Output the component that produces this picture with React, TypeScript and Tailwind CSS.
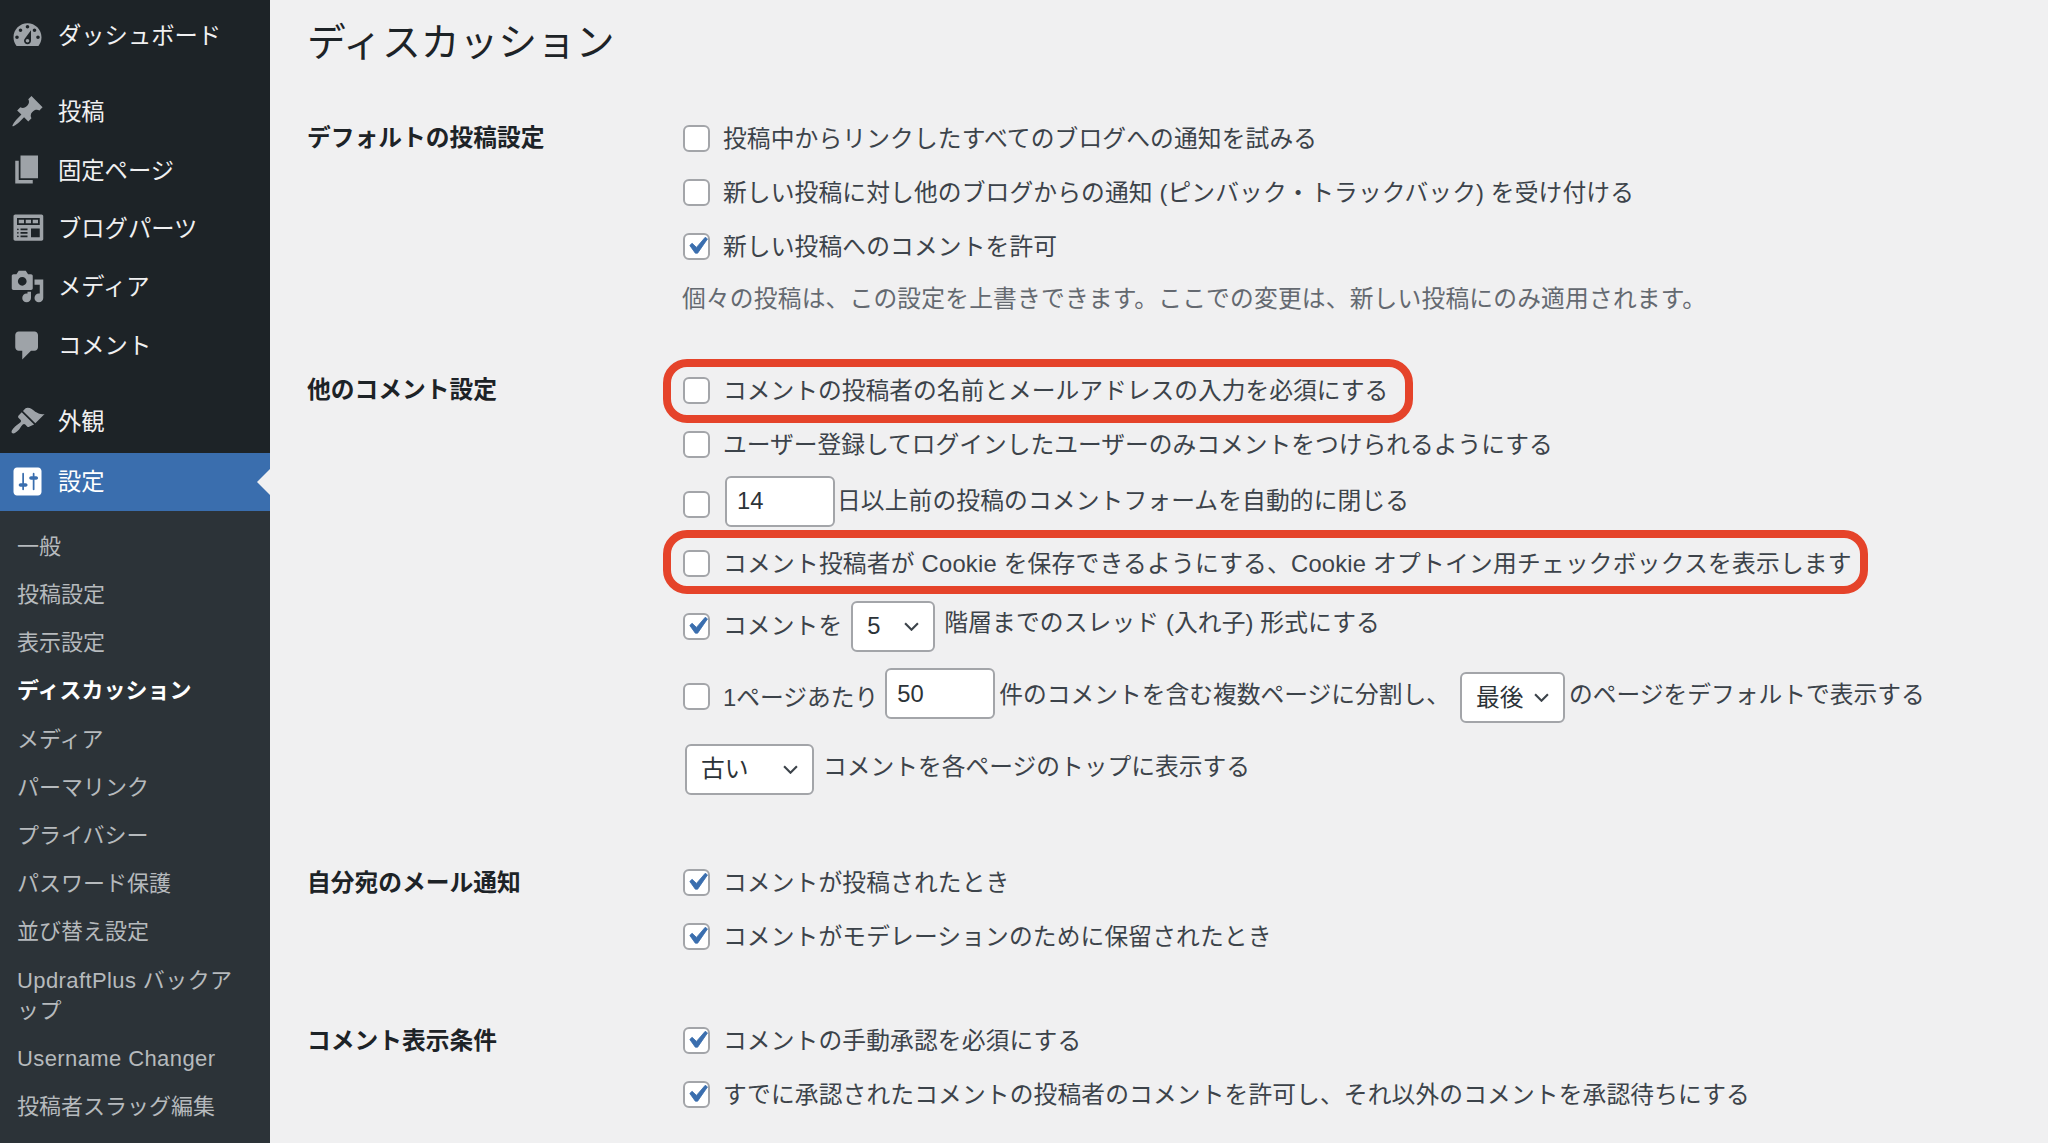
import type { ReactNode } from 'react'

const icons = {
  dashboard:
    'M3.76 16h12.48c1.1-1.37 1.76-3.11 1.76-5 0-4.42-3.58-8-8-8s-8 3.58-8 8c0 1.89.66 3.63 1.76 5zM10 4c.55 0 1 .45 1 1s-.45 1-1 1-1-.45-1-1 .45-1 1-1zM6 6c.55 0 1 .45 1 1s-.45 1-1 1-1-.45-1-1 .45-1 1-1zm8 0c.55 0 1 .45 1 1s-.45 1-1 1-1-.45-1-1 .45-1 1-1zm-5.37 5.55L12 7v6c0 1.1-.9 2-2 2s-2-.9-2-2c0-.57.24-1.08.63-1.45zM4 10c.55 0 1 .45 1 1s-.45 1-1 1-1-.45-1-1 .45-1 1-1zm12 0c.55 0 1 .45 1 1s-.45 1-1 1-1-.45-1-1 .45-1 1-1zm-5 3c0-.55-.45-1-1-1s-1 .45-1 1 .45 1 1 1 1-.45 1-1z',
  pin: 'M10.44 3.02l1.82-1.82 6.36 6.35-1.83 1.82c-1.05-.68-2.48-.57-3.41.36l-.75.75c-.92.93-1.04 2.35-.35 3.41l-1.83 1.82-2.41-2.41-2.8 2.79c-.42.42-3.38 2.71-3.8 2.29s1.86-3.39 2.28-3.81l2.79-2.79L4.1 9.36l1.83-1.82c1.05.69 2.48.57 3.4-.36l.75-.75c.93-.92 1.05-2.35.36-3.41z',
  pages: 'M6 15V2h10v13H6zm-1 1h8v2H3V5h2v11z',
  widgets:
    'M19 16V3c0-.55-.45-1-1-1H3c-.55 0-1 .45-1 1v13c0 .55.45 1 1 1h15c.55 0 1-.45 1-1zM4 4h13v4H4V4zm1 1v2h3V5H5zm4 0v2h3V5H9zm4 0v2h3V5h-3zm-8.5 5c.28 0 .5.22.5.5s-.22.5-.5.5-.5-.22-.5-.5.22-.5.5-.5zM6 10h4v1H6v-1zm6 0h5v5h-5v-5zm-7.5 2c.28 0 .5.22.5.5s-.22.5-.5.5-.5-.22-.5-.5.22-.5.5-.5zM6 12h4v1H6v-1zm-1.5 2c.28 0 .5.22.5.5s-.22.5-.5.5-.5-.22-.5-.5.22-.5.5-.5zM6 14h4v1H6v-1z',
  media:
    'M13 11V4c0-.55-.45-1-1-1h-1.67L9 1H5L3.67 3H2c-.55 0-1 .45-1 1v7c0 .55.45 1 1 1h10c.55 0 1-.45 1-1zM7 4.5c1.38 0 2.5 1.12 2.5 2.5S8.38 9.5 7 9.5 4.5 8.38 4.5 7 5.62 4.5 7 4.5zM14 6h5v10.5c0 1.38-1.12 2.5-2.5 2.5S14 17.88 14 16.5s1.12-2.5 2.5-2.5c.17 0 .34.02.5.05V9h-3V6zm-4 8.05V13h2v3.5c0 1.38-1.12 2.5-2.5 2.5S7 17.88 7 16.5 8.12 14 9.5 14c.17 0 .34.02.5.05z',
  comments: 'M5 2h9c1.1 0 2 .9 2 2v7c0 1.1-.9 2-2 2h-2l-5 5v-5H5c-1.1 0-2-.9-2-2V4c0-1.1.9-2 2-2z',
  appearance:
    'M14.48 11.06L7.41 3.99l1.5-1.5c.5-.56 2.3-.47 3.51.32 1.21.8 1.43 1.28 2.91 2.1 1.18.64 2.45 1.26 4.45.85zm-.71.71L6.7 4.77 4.93 6.54c-.39.39-.39 1.02 0 1.41l1.06 1.06c.39.39.39 1.03 0 1.42-.6.6-1.43 1.11-2.21 1.69-.35.26-.7.53-1.01.84-1.34 1.34-2.37 2.85-1.6 3.62.77.77 2.28-.26 3.6-1.6.31-.31.58-.66.84-1.01.58-.78 1.09-1.61 1.69-2.21.39-.39 1.02-.39 1.41 0l1.06 1.06c.39.39 1.02.39 1.41 0z',
  settings:
    'M18 16V4c0-1.1-.9-2-2-2H4c-1.1 0-2 .9-2 2v12c0 1.1.9 2 2 2h12c1.1 0 2-.9 2-2zM8 11h1c.55 0 1 .45 1 1s-.45 1-1 1H8v1.5c0 .28-.22.5-.5.5s-.5-.22-.5-.5V13H6c-.55 0-1-.45-1-1s.45-1 1-1h1V5.5c0-.28.22-.5.5-.5s.5.22.5.5V11zm5-2h-1c-.55 0-1-.45-1-1s.45-1 1-1h1V5.5c0-.28.22-.5.5-.5s.5.22.5.5V7h1c.55 0 1 .45 1 1s-.45 1-1 1h-1v5.5c0 .28-.22.5-.5.5s-.5-.22-.5-.5V9z',
}

function MenuIcon({ d, light }: { d: string; light?: boolean }) {
  return (
    <svg viewBox="0 0 20 20" className={`w-[35px] h-[35px] ml-[10px] mr-[13px] shrink-0 ${light ? 'fill-white' : 'fill-[#9ea3a8]'}`}>
      <path d={d} />
    </svg>
  )
}

function MenuItem({ icon, label, gap }: { icon: string; label: string; gap?: boolean }) {
  return (
    <div className={`flex items-center h-[58.4px] text-[23.3px] text-[#f0f0f1] ${gap ? 'mb-[18px]' : ''}`}>
      <MenuIcon d={icon} />
      <span className="pt-[2px]">{label}</span>
    </div>
  )
}

const subItems = ['一般', '投稿設定', '表示設定', 'ディスカッション', 'メディア', 'パーマリンク', 'プライバシー', 'パスワード保護', '並び替え設定', 'UpdraftPlus バックアップ', 'Username Changer', '投稿者スラッグ編集']

function Sidebar() {
  return (
    <aside className="flex flex-col w-[270px] shrink-0 bg-[#1d2327] pt-[6px]">
      <MenuItem icon={icons.dashboard} label="ダッシュボード" gap />
      <MenuItem icon={icons.pin} label="投稿" />
      <MenuItem icon={icons.pages} label="固定ページ" />
      <MenuItem icon={icons.widgets} label="ブログパーツ" />
      <MenuItem icon={icons.media} label="メディア" />
      <MenuItem icon={icons.comments} label="コメント" gap />
      <MenuItem icon={icons.appearance} label="外観" />
      <div className="relative flex items-center h-[58px] mt-[2px] bg-[#3a6eae] text-[23.3px] text-white">
        <MenuIcon d={icons.settings} light />
        <span className="pt-[2px]">設定</span>
        <div className="absolute right-0 top-[16px] border-y-[13px] border-r-[13px] border-y-transparent border-r-[#f0f0f1]" />
      </div>
      <div className="flex-1 bg-[#2c3338] pt-[12px]">
        {subItems.map((item) => (
          <div
            key={item}
            className={`pl-[17px] pr-[30px] py-[9.1px] text-[22px] leading-[30px] ${item === 'ディスカッション' ? 'font-bold text-white' : 'text-[#b6babd]'} ${item.startsWith('U') ? 'tracking-[0.4px]' : ''}`}
          >
            {item}
          </div>
        ))}
      </div>
    </aside>
  )
}

function Checkbox({ checked, className = '' }: { checked?: boolean; className?: string }) {
  return (
    <span className={`flex items-center justify-center w-[27px] h-[27px] shrink-0 bg-white border-2 border-[#a3a5a9] rounded-[6px] ${className}`}>
      {checked && (
        <svg viewBox="0 0 20 20" className="w-[34px] h-[34px] shrink-0 fill-[#3a6eae] stroke-[#3a6eae] stroke-[0.5]">
          <path d="M14.83 4.89l1.34.94-5.81 8.38H9.02L5.78 9.67l1.34-1.25 2.57 2.4z" />
        </svg>
      )}
    </span>
  )
}

function TextInput({ value, className = '' }: { value: string; className?: string }) {
  return (
    <input
      readOnly
      value={value}
      className={`w-[110px] h-[51px] shrink-0 bg-white border-2 border-[#a3a5a9] rounded-[6px] px-[10px] text-[#2c3338] outline-none ${className}`}
    />
  )
}

function Select({ value, className = '' }: { value: string; className: string }) {
  return (
    <div className={`relative shrink-0 h-[51px] ${className}`}>
      <select
        value={value}
        disabled
        className="appearance-none w-full h-full bg-white border-2 border-[#a3a5a9] rounded-[6px] pl-[14px] pr-[30px] text-[#2c3338] opacity-100 outline-none"
      >
        <option>{value}</option>
      </select>
      <svg viewBox="0 0 14 8" className="absolute right-[16px] top-[21px] w-[15px] h-[9px] fill-none stroke-[#3c434a] stroke-[2]">
        <path d="M1 1l6 6 6-6" />
      </svg>
    </div>
  )
}

function Row({ className, children, box }: { className: string; children: ReactNode; box?: string }) {
  return (
    <div className={`relative flex items-center whitespace-nowrap ${className}`}>
      {box && <div className={`absolute left-[-19px] h-[64px] border-[8px] border-[#e5432a] rounded-[24px] ${box}`} />}
      {children}
    </div>
  )
}

function CheckRow({ checked, label, box, className = '' }: { checked?: boolean; label: string; box?: string; className?: string }) {
  return (
    <Row className={`h-[54px] ${className}`} box={box}>
      <Checkbox checked={checked} className="ml-[1px] mr-[13px]" />
      <span className="pt-[1px]">{label}</span>
    </Row>
  )
}

function Section({ title, className, children }: { title: string; className: string; children: ReactNode }) {
  return (
    <section className={`flex ${className}`}>
      <h2 className="w-[375px] shrink-0 h-[54px] flex items-center font-semibold tracking-normal text-[#1d2327]">{title}</h2>
      <div className="flex-1">{children}</div>
    </section>
  )
}

export default function App() {
  return (
    <div className="flex h-[1143px] w-[2048px] overflow-hidden bg-[#f0f0f1] font-['Liberation_Sans','Noto_Sans_CJK_JP',sans-serif]">
      <Sidebar />
      <main className="flex-1 pl-[37px] text-[23.75px] tracking-[0.12px] text-[#3c434a]">
        <h1 className="h-[84px] flex items-center pt-[2px] text-[38.8px] font-normal tracking-normal text-[#1d2327]">ディスカッション</h1>

        <Section title="デフォルトの投稿設定" className="mt-[27.3px]">
          <CheckRow label="投稿中からリンクしたすべてのブログへの通知を試みる" />
          <CheckRow label="新しい投稿に対し他のブログからの通知 (ピンバック・トラックバック) を受け付ける" />
          <CheckRow checked label="新しい投稿へのコメントを許可" />
          <Row className="h-[51px] tracking-[0.18px] text-[#646970]">
            <span>個々の投稿は、この設定を上書きできます。ここでの変更は、新しい投稿にのみ適用されます。</span>
          </Row>
        </Section>

        <Section title="他のコメント設定" className="mt-[39px]">
          <CheckRow label="コメントの投稿者の名前とメールアドレスの入力を必須にする" box="top-[-4.5px] w-[750px]" className="tracking-normal" />
          <CheckRow label="ユーザー登録してログインしたユーザーのみコメントをつけられるようにする" className="tracking-normal" />
          <Row className="h-[60px]">
            <Checkbox className="ml-[1px] mr-[15px] mt-[6px]" />
            <TextInput value="14" />
            <span className="ml-[2px]">日以上前の投稿のコメントフォームを自動的に閉じる</span>
          </Row>
          <Row className="h-[64px] tracking-[0.22px]" box="top-[-1.5px] w-[1205px]">
            <Checkbox className="ml-[1px] mr-[13px]" />
            <span className="pt-[2px]">コメント投稿者が Cookie を保存できるようにする、Cookie オプトイン用チェックボックスを表示します</span>
          </Row>
          <Row className="h-[62px]">
            <Checkbox checked className="ml-[1px] mr-[13px]" />
            <span>コメントを</span>
            <Select value="5" className="w-[84px] ml-[9px]" />
            <span className="ml-[9px] mb-[6px]">階層までのスレッド (入れ子) 形式にする</span>
          </Row>
          <Row className="h-[78px] tracking-normal">
            <Checkbox className="ml-[1px] mr-[13px]" />
            <span className="mt-[3px]">1ページあたり</span>
            <TextInput value="50" className="ml-[7px] mb-[5px]" />
            <span className="ml-[4px] mb-[3px]">件のコメントを含む複数ページに分割し、</span>
            <Select value="最後" className="w-[105px] ml-[10px] mt-[3px]" />
            <span className="ml-[4px] mb-[3px]">のページをデフォルトで表示する</span>
          </Row>
          <Row className="h-[68px] tracking-normal">
            <Select value="古い" className="w-[129px] ml-[3px]" />
            <span className="ml-[9px] mb-[4px]">コメントを各ページのトップに表示する</span>
          </Row>
        </Section>

        <Section title="自分宛のメール通知" className="mt-[52.2px]">
          <CheckRow checked label="コメントが投稿されたとき" />
          <CheckRow checked label="コメントがモデレーションのために保留されたとき" />
        </Section>

        <Section title="コメント表示条件" className="mt-[49.9px]">
          <CheckRow checked label="コメントの手動承認を必須にする" />
          <CheckRow checked label="すでに承認されたコメントの投稿者のコメントを許可し、それ以外のコメントを承認待ちにする" />
        </Section>
      </main>
    </div>
  )
}
